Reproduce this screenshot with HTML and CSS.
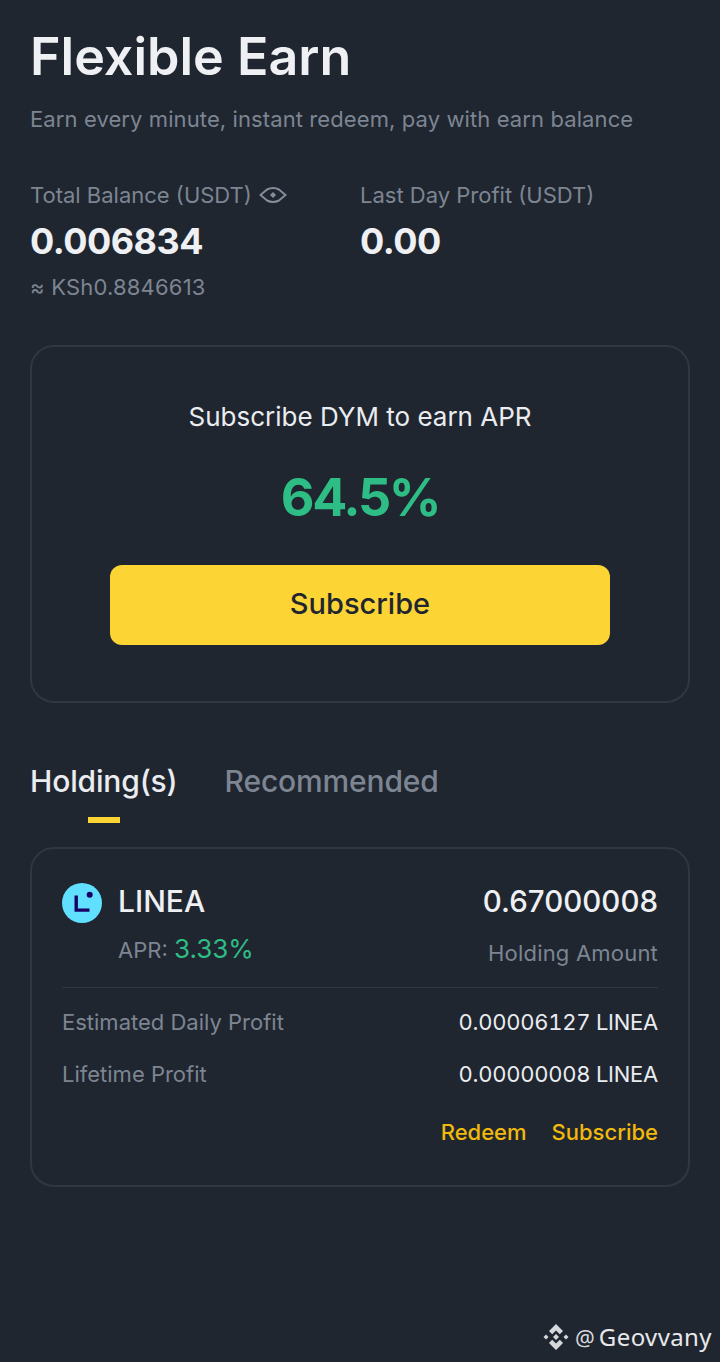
FILE: index.html
```html
<!DOCTYPE html>
<html lang="en">
<head>
<meta charset="utf-8">
<title>Flexible Earn</title>
<link rel="stylesheet" href="styles.css">
</head>
<body>
<main class="page">
  <h1 class="title">Flexible Earn</h1>
  <p class="subtitle">Earn every minute, instant redeem, pay with earn balance</p>
  <section class="stats">
    <div class="stat">
      <div class="stat-label">Total Balance (USDT)
        <svg class="eye" viewBox="0 0 28 20" width="28" height="20" fill="none" stroke="#848e9c" stroke-width="2"><path d="M1.500 10L8 4.500Q14 1.500 20 4.500L26.500 10L20 15.500Q14 18.500 8 15.500z"/><path d="M14 7l3 3-3 3-3-3z" fill="#848e9c" stroke="none"/></svg>
      </div>
      <div class="stat-value">0.006834</div>
      <div class="stat-sub">≈ KSh0.8846613</div>
    </div>
    <div class="stat">
      <div class="stat-label">Last Day Profit (USDT)</div>
      <div class="stat-value">0.00</div>
    </div>
  </section>
  <section class="promo">
    <div class="promo-text">Subscribe DYM to earn APR</div>
    <div class="promo-rate">64.5%</div>
    <button class="promo-btn">Subscribe</button>
  </section>
  <nav class="tabs">
    <div class="tab tab-active">Holding(s)<span class="tab-bar"></span></div>
    <div class="tab">Recommended</div>
  </nav>
  <section class="card">
    <div class="card-top">
      <div class="coin">
        <svg class="coin-icon" viewBox="0 0 40 40" width="40" height="40"><circle cx="20" cy="20" r="20" fill="#61dfff"/><path d="M12.500 12.500h3.400v13H27.500v3.300H12.500z" fill="#190066"/><circle cx="27.700" cy="11.700" r="3" fill="#190066"/></svg>
        <div>
          <div class="coin-name">LINEA</div>
          <div class="coin-apr">APR: <span class="green">3.33%</span></div>
        </div>
      </div>
      <div class="amount">
        <div class="amount-value">0.67000008</div>
        <div class="amount-label">Holding Amount</div>
      </div>
    </div>
    <div class="row"><span class="row-label">Estimated Daily Profit</span><span class="row-value">0.00006127 LINEA</span></div>
    <div class="row"><span class="row-label">Lifetime Profit</span><span class="row-value">0.00000008 LINEA</span></div>
    <div class="actions"><span>Redeem</span><span>Subscribe</span></div>
  </section>
</main>
<div class="mark">
  <svg class="mark-logo" viewBox="0 0 28 28" width="28" height="28" fill="#d6d8db"><path d="M14 1l7 7-3.200 3.200L14 7.400l-3.800 3.800L7 8z"/><path d="M14 27l7-7-3.200-3.200L14 20.600l-3.800-3.800L7 20z"/><path d="M14 11l3 3-3 3-3-3z"/><path d="M4 11.500L6.500 14 4 16.500 1.500 14z"/><path d="M24 11.500l2.500 2.500-2.500 2.500-2.500-2.500z"/></svg>
  <span class="mark-at">@</span><span class="mark-name">Geovvany</span>
</div>
</body>
</html>
```
FILE: styles.css
```css
* { box-sizing: border-box; }
html, body { margin: 0; height: 1362px; overflow: hidden; }
body {
  background: #1f2630;
  color: #eaecef;
  font-family: "Inter", "Liberation Sans", sans-serif;
  position: relative;
}
.page { padding: 27px 30px 0; }
.title { margin: 0; font-size: 52px; line-height: 60px; font-weight: 600; letter-spacing: 0; color: #eef0f3; }
.subtitle { margin: 17px 0 0; font-size: 22px; line-height: 30px; color: #7d8592; letter-spacing: 0.1px; }
.stats { display: flex; margin-top: 46px; height: 127px; }
.stat { width: 330px; }
.stat-label { display: flex; align-items: center; gap: 7px; font-size: 22px; line-height: 30px; color: #7d8592; }
.eye { display: block; }
.stat-value { margin-top: 9px; font-size: 36px; line-height: 44px; font-weight: 700; color: #eef0f3; letter-spacing: -0.5px; }
.stat-sub { margin-top: 9px; font-size: 22px; line-height: 30px; color: #7d8592; letter-spacing: 0.2px; }
.promo {
  margin-top: 38px; height: 358px; border: 2px solid #2f3742; border-radius: 24px;
  display: flex; flex-direction: column; align-items: center; padding: 0 78px;
}
.promo-text { margin-top: 53px; font-size: 26px; line-height: 34px; color: #eaecef; }
.promo-rate { margin-top: 32px; font-size: 52px; line-height: 64px; font-weight: 700; color: #2ebd85; letter-spacing: -2.4px; }
.promo-btn {
  margin-top: 35px; width: 500px; height: 80px; padding: 0 0 2px; border: 0; border-radius: 12px;
  background: #fcd535; color: #1f2630; font: 500 29px/40px "Inter", "Liberation Sans", sans-serif;
}
.tabs { display: flex; gap: 47px; margin-top: 56px; height: 66px; }
.tab { position: relative; font-size: 30px; line-height: 44px; font-weight: 500; color: #7d8592; letter-spacing: -0.15px; }
.tab-active { color: #eaecef; }
.tab-bar { position: absolute; left: 58px; top: 58px; width: 32px; height: 6px; background: #fcd535; }
.card { margin-top: 22px; height: 340px; border: 2px solid #2f3742; border-radius: 24px; padding: 30px; }
.card-top { display: flex; justify-content: space-between; height: 109px; margin-bottom: 8px; border-bottom: 1px solid #2f3742; }
.coin { display: flex; gap: 16px; }
.coin-icon { display: block; margin-top: 4px; }
.coin-name { font-size: 30px; line-height: 44px; font-weight: 500; color: #eef0f3; }
.coin-apr { margin-top: 11px; font-size: 22px; line-height: 30px; color: #7d8592; }
.green { color: #2ebd85; font-size: 26px; }
.amount { text-align: right; }
.amount-value { font-size: 29.500px; line-height: 44px; font-weight: 500; color: #eef0f3; }
.amount-label { margin-top: 15px; font-size: 22px; line-height: 30px; color: #7d8592; letter-spacing: 0.2px; }
.row { display: flex; justify-content: space-between; align-items: center; height: 52px; font-size: 22px; }
.row-label { color: #7d8592; }
.row-value { color: #eaecef; font-variant-numeric: tabular-nums; letter-spacing: -0.25px; }
.actions { display: flex; justify-content: flex-end; gap: 25px; margin-top: 17px; font-size: 22px; line-height: 30px; font-weight: 500; color: #f0b90b; }
.mark { position: absolute; right: 8px; bottom: 10px; display: flex; align-items: center; color: #e8e9eb; }
.mark-logo { display: block; margin-right: 5px; }
.mark-at { font: 22px/30px "Noto Sans", sans-serif; margin-right: 4px; color: #d6d8db; }
.mark-name { font: 24px/30px "Noto Sans", sans-serif; letter-spacing: 0.4px; }
```
